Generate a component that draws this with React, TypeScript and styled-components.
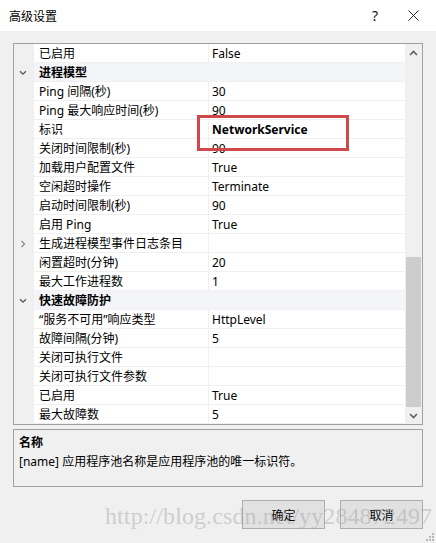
import React from "react";
import styled, { createGlobalStyle } from "styled-components";

const Global = createGlobalStyle`
  html, body { margin: 0; padding: 0; }
  body {
    background: #f0f0f0;
    font-family: "Noto Sans", "Noto Sans CJK SC", sans-serif;
    font-size: 12px;
    color: #000;
  }
  * { box-sizing: border-box; }
`;

const Window = styled.div`
  position: relative;
  width: 436px;
  height: 543px;
  background: #f0f0f0;
  display: flex;
  flex-direction: column;
  overflow: hidden;
`;

const TitleBar = styled.div`
  height: 31px;
  background: #fff;
  display: flex;
  align-items: center;
  padding-left: 9px;
`;

const Title = styled.div`
  flex: 1;
  font-size: 12px;
  line-height: 14px;
  font-family: "Noto Sans CJK SC", sans-serif;
`;

const TitleButton = styled.div<{ $w: number }>`
  width: ${(p) => p.$w}px;
  height: 31px;
  display: flex;
  align-items: center;
  justify-content: center;
  font-size: 14px;
  font-family: "Noto Sans", sans-serif;
  color: #111;
`;

const Body = styled.div`
  flex: 1;
  display: flex;
  flex-direction: column;
  padding: 12px 13px 0 13px;
`;

const Grid = styled.div`
  position: relative;
  height: 382px;
  border: 1px solid #a0a0a0;
  background: #fff;
  display: flex;
`;

const Rows = styled.div`
  position: relative;
  flex: 1;
  display: flex;
  flex-direction: column;
`;

const Row = styled.div`
  height: 19px;
  display: grid;
  grid-template-columns: 20px 175px 1fr;
`;

const Margin = styled.div`
  background: #f0f0f0;
  display: flex;
  align-items: center;
  justify-content: center;
  padding-right: 3px;
`;

const NameCell = styled.div<{ $cat?: boolean }>`
  border-bottom: 1px solid #f0f0f0;
  border-right: ${(p) => (p.$cat ? "none" : "1px solid #f0f0f0")};
  background: ${(p) => (p.$cat ? "#f3f5f8" : "#fff")};
  padding: 1px 0 0 5px;
  line-height: 18px;
  overflow: hidden;
  white-space: nowrap;
  font-weight: ${(p) => (p.$cat ? 700 : 400)};
  grid-column: ${(p) => (p.$cat ? "2 / 4" : "auto")};
`;

const ValueCell = styled.div<{ $bold?: boolean }>`
  border-bottom: 1px solid #f0f0f0;
  padding: 1px 0 0 3px;
  line-height: 18px;
  overflow: hidden;
  white-space: nowrap;
  font-weight: ${(p) => (p.$bold ? 700 : 400)};
`;

const Highlight = styled.div`
  position: absolute;
  left: 183px;
  top: 71px;
  width: 152px;
  height: 36px;
  border: 3px solid #d0494a;
  pointer-events: none;
`;

const ScrollBar = styled.div`
  width: 17px;
  background: #f0f0f0;
  display: flex;
  flex-direction: column;
`;

const ScrollButton = styled.div`
  height: 17px;
  display: flex;
  align-items: center;
  justify-content: center;
`;

const Track = styled.div`
  flex: 1;
  display: flex;
  flex-direction: column;
  justify-content: flex-end;
  padding: 0 1px;
`;

const Thumb = styled.div`
  height: 150px;
  background: #cdcdcd;
`;

const Desc = styled.div`
  margin-top: 4px;
  height: 58px;
  border: 1px solid #a0a0a0;
  background: #f0f0f0;
  padding: 2px 5px;
  line-height: 20px;
`;

const DescTitle = styled.div`
  font-weight: 700;
  font-family: "Noto Sans CJK SC", sans-serif;
`;

const Buttons = styled.div`
  margin-top: 13px;
  display: flex;
  justify-content: flex-end;
  gap: 15px;
`;

const Button = styled.div`
  width: 83px;
  height: 29px;
  background: #e1e1e1;
  border: 1px solid #adadad;
  display: flex;
  align-items: center;
  justify-content: center;
  font-family: "Noto Sans CJK SC", sans-serif;
  font-size: 12px;
`;

const Watermark = styled.div`
  position: absolute;
  left: 105px;
  top: 503px;
  font-family: "Liberation Serif", serif;
  font-size: 24px;
  letter-spacing: 0.1px;
  color: rgba(150, 150, 150, 0.4);
  white-space: nowrap;
  pointer-events: none;
`;

const Grip = styled.svg`
  position: absolute;
  right: 2px;
  bottom: 2px;
`;

type R = { name?: string; value?: string; cat?: string; bold?: boolean; expand?: boolean };

const rows: R[] = [
  { name: "已启用", value: "False" },
  { cat: "进程模型" },
  { name: "Ping 间隔(秒)", value: "30" },
  { name: "Ping 最大响应时间(秒)", value: "90" },
  { name: "标识", value: "NetworkService", bold: true },
  { name: "关闭时间限制(秒)", value: "90" },
  { name: "加载用户配置文件", value: "True" },
  { name: "空闲超时操作", value: "Terminate" },
  { name: "启动时间限制(秒)", value: "90" },
  { name: "启用 Ping", value: "True" },
  { name: "生成进程模型事件日志条目", value: "", expand: true },
  { name: "闲置超时(分钟)", value: "20" },
  { name: "最大工作进程数", value: "1" },
  { cat: "快速故障防护" },
  { name: "“服务不可用”响应类型", value: "HttpLevel" },
  { name: "故障间隔(分钟)", value: "5" },
  { name: "关闭可执行文件", value: "" },
  { name: "关闭可执行文件参数", value: "" },
  { name: "已启用", value: "True" },
  { name: "最大故障数", value: "5" },
];

const ChevronDown = () => (
  <svg width="8" height="6" viewBox="0 0 8 6">
    <path d="M1 1.2 L4 4.2 L7 1.2" fill="none" stroke="#555" strokeWidth="1.3" />
  </svg>
);

const ChevronRight = () => (
  <svg width="6" height="8" viewBox="0 0 6 8">
    <path d="M1.5 1 L4.5 4 L1.5 7" fill="none" stroke="#888" strokeWidth="1.2" />
  </svg>
);

const ArrowUp = () => (
  <svg width="9" height="6" viewBox="0 0 9 6">
    <path d="M1 5 L4.5 1.5 L8 5" fill="none" stroke="#606060" strokeWidth="1.6" />
  </svg>
);

const ArrowDown = () => (
  <svg width="9" height="6" viewBox="0 0 9 6">
    <path d="M1 1 L4.5 4.5 L8 1" fill="none" stroke="#606060" strokeWidth="1.6" />
  </svg>
);

export default function App() {
  return (
    <>
      <Global />
      <Window>
        <TitleBar>
          <Title>高级设置</Title>
          <TitleButton $w={30}>?</TitleButton>
          <TitleButton $w={46}>
            <svg width="11" height="11" viewBox="0 0 11 11">
              <path d="M0.5 0.5 L10.5 10.5 M10.5 0.5 L0.5 10.5" stroke="#222" strokeWidth="1" />
            </svg>
          </TitleButton>
        </TitleBar>
        <Body>
          <Grid>
            <Rows>
              {rows.map((r, i) =>
                r.cat ? (
                  <Row key={i}>
                    <Margin>
                      <ChevronDown />
                    </Margin>
                    <NameCell $cat>{r.cat}</NameCell>
                  </Row>
                ) : (
                  <Row key={i}>
                    <Margin>{r.expand ? <ChevronRight /> : null}</Margin>
                    <NameCell>{r.name}</NameCell>
                    <ValueCell $bold={r.bold}>{r.value}</ValueCell>
                  </Row>
                )
              )}
              <Highlight />
            </Rows>
            <ScrollBar>
              <ScrollButton>
                <ArrowUp />
              </ScrollButton>
              <Track>
                <Thumb />
              </Track>
              <ScrollButton>
                <ArrowDown />
              </ScrollButton>
            </ScrollBar>
          </Grid>
          <Desc>
            <DescTitle>名称</DescTitle>
            <div>[name] 应用程序池名称是应用程序池的唯一标识符。</div>
          </Desc>
          <Buttons>
            <Button>确定</Button>
            <Button>取消</Button>
          </Buttons>
        </Body>
        <Watermark>http://blog.csdn.net/yy284872497</Watermark>
        <Grip width="8" height="8" viewBox="0 0 8 8">
          <rect x="6" y="0" width="2" height="2" fill="#b8b8b8" />
          <rect x="3" y="3" width="2" height="2" fill="#b8b8b8" />
          <rect x="6" y="3" width="2" height="2" fill="#b8b8b8" />
          <rect x="0" y="6" width="2" height="2" fill="#b8b8b8" />
          <rect x="3" y="6" width="2" height="2" fill="#b8b8b8" />
          <rect x="6" y="6" width="2" height="2" fill="#b8b8b8" />
        </Grip>
      </Window>
    </>
  );
}
